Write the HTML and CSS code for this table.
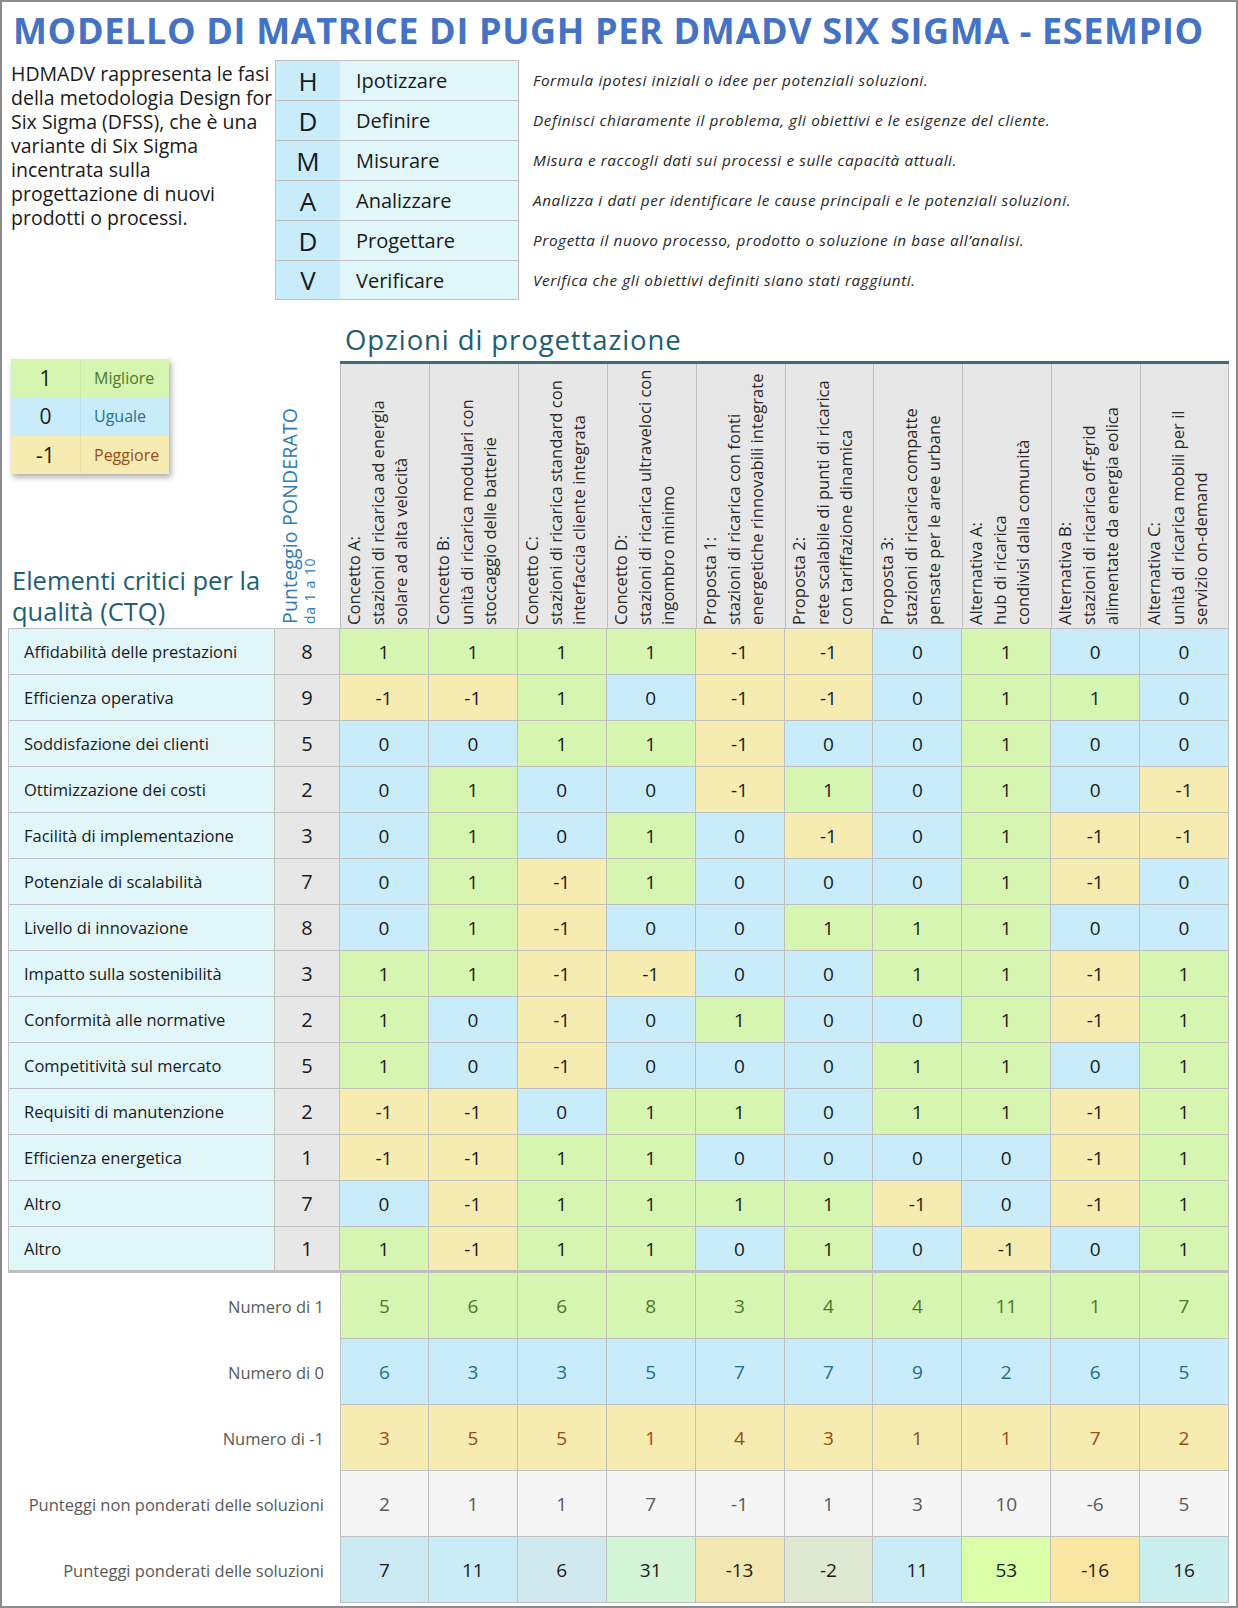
FILE: index.html
```html
<!DOCTYPE html>
<html lang="it">
<head>
<meta charset="utf-8">
<title>Matrice di Pugh DMADV</title>
<link rel="stylesheet" href="styles.css">
</head>
<body>
<div class="page">
  <h1 class="title">MODELLO DI MATRICE DI PUGH PER DMADV SIX SIGMA - ESEMPIO</h1>

  <section class="intro">
    <p class="intro-text">HDMADV rappresenta le fasi<br>della metodologia Design for<br>Six Sigma (DFSS), che è una<br>variante di Six Sigma<br>incentrata sulla<br>progettazione di nuovi<br>prodotti o processi.</p>
    <div class="phases">
      <div class="letter first">H</div><div class="name first">Ipotizzare</div><div class="desc">Formula ipotesi iniziali o idee per potenziali soluzioni.</div>
      <div class="letter">D</div><div class="name">Definire</div><div class="desc">Definisci chiaramente il problema, gli obiettivi e le esigenze del cliente.</div>
      <div class="letter">M</div><div class="name">Misurare</div><div class="desc">Misura e raccogli dati sui processi e sulle capacità attuali.</div>
      <div class="letter">A</div><div class="name">Analizzare</div><div class="desc">Analizza i dati per identificare le cause principali e le potenziali soluzioni.</div>
      <div class="letter">D</div><div class="name">Progettare</div><div class="desc">Progetta il nuovo processo, prodotto o soluzione in base all’analisi.</div>
      <div class="letter last">V</div><div class="name last">Verificare</div><div class="desc">Verifica che gli obiettivi definiti siano stati raggiunti.</div>
    </div>
  </section>

  <section class="top">
    <div class="ctq-head">
      <div class="legend">
        <div class="n g">1</div><div class="t g t-g">Migliore</div>
        <div class="n b">0</div><div class="t b t-b">Uguale</div>
        <div class="n y">-1</div><div class="t y t-y">Peggiore</div>
      </div>
      <div class="ctq-title">Elementi critici per la<br>qualità (CTQ)</div>
    </div>
    <div class="weight-head">
      <div class="vtext"><span class="wt-main">Punteggio PONDERATO</span><span class="wt-sub">da 1 a 10</span></div>
    </div>
    <div class="options">
      <div class="options-title">Opzioni di progettazione</div>
      <div class="hcells">
        <div class="hcell"><div class="htext">Concetto A:<br>stazioni di ricarica ad energia<br>solare ad alta velocità</div></div>
        <div class="hcell"><div class="htext">Concetto B:<br>unità di ricarica modulari con<br>stoccaggio delle batterie</div></div>
        <div class="hcell"><div class="htext">Concetto C:<br>stazioni di ricarica standard con<br>interfaccia cliente integrata</div></div>
        <div class="hcell"><div class="htext">Concetto D:<br>stazioni di ricarica ultraveloci con<br>ingombro minimo</div></div>
        <div class="hcell"><div class="htext">Proposta 1:<br>stazioni di ricarica con fonti<br>energetiche rinnovabili integrate</div></div>
        <div class="hcell"><div class="htext">Proposta 2:<br>rete scalabile di punti di ricarica<br>con tariffazione dinamica</div></div>
        <div class="hcell"><div class="htext">Proposta 3:<br>stazioni di ricarica compatte<br>pensate per le aree urbane</div></div>
        <div class="hcell"><div class="htext">Alternativa A:<br>hub di ricarica<br>condivisi dalla comunità</div></div>
        <div class="hcell"><div class="htext">Alternativa B:<br>stazioni di ricarica off-grid<br>alimentate da energia eolica</div></div>
        <div class="hcell lastcol"><div class="htext">Alternativa C:<br>unità di ricarica mobili per il<br>servizio on-demand</div></div>
      </div>
    </div>
  </section>

  <section class="matrix">
    <div class="lbl">Affidabilità delle prestazioni</div><div class="w">8</div>
    <div class="g">1</div><div class="g">1</div><div class="g">1</div><div class="g">1</div><div class="y">-1</div><div class="y">-1</div><div class="b">0</div><div class="g">1</div><div class="b">0</div><div class="b">0</div>

    <div class="lbl">Efficienza operativa</div><div class="w">9</div>
    <div class="y">-1</div><div class="y">-1</div><div class="g">1</div><div class="b">0</div><div class="y">-1</div><div class="y">-1</div><div class="b">0</div><div class="g">1</div><div class="g">1</div><div class="b">0</div>

    <div class="lbl">Soddisfazione dei clienti</div><div class="w">5</div>
    <div class="b">0</div><div class="b">0</div><div class="g">1</div><div class="g">1</div><div class="y">-1</div><div class="b">0</div><div class="b">0</div><div class="g">1</div><div class="b">0</div><div class="b">0</div>

    <div class="lbl">Ottimizzazione dei costi</div><div class="w">2</div>
    <div class="b">0</div><div class="g">1</div><div class="b">0</div><div class="b">0</div><div class="y">-1</div><div class="g">1</div><div class="b">0</div><div class="g">1</div><div class="b">0</div><div class="y">-1</div>

    <div class="lbl">Facilità di implementazione</div><div class="w">3</div>
    <div class="b">0</div><div class="g">1</div><div class="b">0</div><div class="g">1</div><div class="b">0</div><div class="y">-1</div><div class="b">0</div><div class="g">1</div><div class="y">-1</div><div class="y">-1</div>

    <div class="lbl">Potenziale di scalabilità</div><div class="w">7</div>
    <div class="b">0</div><div class="g">1</div><div class="y">-1</div><div class="g">1</div><div class="b">0</div><div class="b">0</div><div class="b">0</div><div class="g">1</div><div class="y">-1</div><div class="b">0</div>

    <div class="lbl">Livello di innovazione</div><div class="w">8</div>
    <div class="b">0</div><div class="g">1</div><div class="y">-1</div><div class="b">0</div><div class="b">0</div><div class="g">1</div><div class="g">1</div><div class="g">1</div><div class="b">0</div><div class="b">0</div>

    <div class="lbl">Impatto sulla sostenibilità</div><div class="w">3</div>
    <div class="g">1</div><div class="g">1</div><div class="y">-1</div><div class="y">-1</div><div class="b">0</div><div class="b">0</div><div class="g">1</div><div class="g">1</div><div class="y">-1</div><div class="g">1</div>

    <div class="lbl">Conformità alle normative</div><div class="w">2</div>
    <div class="g">1</div><div class="b">0</div><div class="y">-1</div><div class="b">0</div><div class="g">1</div><div class="b">0</div><div class="b">0</div><div class="g">1</div><div class="y">-1</div><div class="g">1</div>

    <div class="lbl">Competitività sul mercato</div><div class="w">5</div>
    <div class="g">1</div><div class="b">0</div><div class="y">-1</div><div class="b">0</div><div class="b">0</div><div class="b">0</div><div class="g">1</div><div class="g">1</div><div class="b">0</div><div class="g">1</div>

    <div class="lbl">Requisiti di manutenzione</div><div class="w">2</div>
    <div class="y">-1</div><div class="y">-1</div><div class="b">0</div><div class="g">1</div><div class="g">1</div><div class="b">0</div><div class="g">1</div><div class="g">1</div><div class="y">-1</div><div class="g">1</div>

    <div class="lbl">Efficienza energetica</div><div class="w">1</div>
    <div class="y">-1</div><div class="y">-1</div><div class="g">1</div><div class="g">1</div><div class="b">0</div><div class="b">0</div><div class="b">0</div><div class="b">0</div><div class="y">-1</div><div class="g">1</div>

    <div class="lbl">Altro</div><div class="w">7</div>
    <div class="b">0</div><div class="y">-1</div><div class="g">1</div><div class="g">1</div><div class="g">1</div><div class="g">1</div><div class="y">-1</div><div class="b">0</div><div class="y">-1</div><div class="g">1</div>

    <div class="lbl end">Altro</div><div class="w end">1</div>
    <div class="g end">1</div><div class="y end">-1</div><div class="g end">1</div><div class="g end">1</div><div class="b end">0</div><div class="g end">1</div><div class="b end">0</div><div class="y end">-1</div><div class="b end">0</div><div class="g end">1</div>
  </section>

  <section class="summary">
    <div class="slbl">Numero di 1</div>
    <div class="g sg first">5</div><div class="g sg">6</div><div class="g sg">6</div><div class="g sg">8</div><div class="g sg">3</div><div class="g sg">4</div><div class="g sg">4</div><div class="g sg">11</div><div class="g sg">1</div><div class="g sg">7</div>

    <div class="slbl">Numero di 0</div>
    <div class="b sb first">6</div><div class="b sb">3</div><div class="b sb">3</div><div class="b sb">5</div><div class="b sb">7</div><div class="b sb">7</div><div class="b sb">9</div><div class="b sb">2</div><div class="b sb">6</div><div class="b sb">5</div>

    <div class="slbl">Numero di -1</div>
    <div class="y sy first thick">3</div><div class="y sy thick">5</div><div class="y sy thick">5</div><div class="y sy thick">1</div><div class="y sy thick">4</div><div class="y sy thick">3</div><div class="y sy thick">1</div><div class="y sy thick">1</div><div class="y sy thick">7</div><div class="y sy thick">2</div>

    <div class="slbl">Punteggi non ponderati delle soluzioni</div>
    <div class="su first">2</div><div class="su">1</div><div class="su">1</div><div class="su">7</div><div class="su">-1</div><div class="su">1</div><div class="su">3</div><div class="su">10</div><div class="su">-6</div><div class="su">5</div>

    <div class="slbl">Punteggi ponderati delle soluzioni</div>
    <div class="sw first thick w1">7</div><div class="sw thick w2">11</div><div class="sw thick w3">6</div><div class="sw thick w4">31</div><div class="sw thick w5">-13</div><div class="sw thick w6">-2</div><div class="sw thick w7">11</div><div class="sw thick w8">53</div><div class="sw thick w9">-16</div><div class="sw thick w10">16</div>
  </section>
</div>
</body>
</html>
```

FILE: styles.css
```css
* { box-sizing: border-box; }

body {
  margin: 0;
  background: #ffffff;
  font-family: "Open Sans", "Liberation Sans", sans-serif;
  color: #262626;
}

.page {
  width: 1238px;
  height: 1608px;
  border: 2px solid #8c8c8c;
  overflow: hidden;
}

/* ---------- title ---------- */
.title {
  margin: 0;
  padding: 7px 0 0 11px;
  font-size: 36px;
  line-height: 44px;
  font-weight: 700;
  color: #4472c4;
  letter-spacing: 0.65px;
  white-space: nowrap;
}

/* ---------- intro ---------- */
.intro {
  display: flex;
  margin-top: 7px;
}

.intro-text {
  margin: 0;
  width: 273px;
  padding: 2px 0 0 9px;
  font-size: 19.5px;
  line-height: 24px;
  white-space: nowrap;
  color: #1a1a1a;
}

.phases {
  display: grid;
  grid-template-columns: 65px 179px auto;
  grid-auto-rows: 40px;
}

.phases .letter,
.phases .name {
  display: flex;
  align-items: center;
  border-top: 1px solid #bfbfbf;
}

.phases .letter {
  justify-content: center;
  background: #c8ecfa;
  border-left: 1px solid #bfbfbf;
  font-size: 26px;
  color: #1a1a1a;
}

.phases .name {
  padding-left: 16px;
  background: #e1f6f9;
  border-right: 1px solid #bfbfbf;
  font-size: 20px;
  color: #1a1a1a;
}

.phases .last {
  border-bottom: 1px solid #bfbfbf;
}

.phases .desc {
  display: flex;
  align-items: center;
  padding-left: 14px;
  font-size: 15.3px;
  letter-spacing: 0.6px;
  font-style: italic;
  color: #262626;
  white-space: nowrap;
}

/* ---------- header area ---------- */
.top {
  display: grid;
  grid-template-columns: 267px 65px 889px;
  margin-left: 6px;
}

.ctq-head {
  display: flex;
  flex-direction: column;
  justify-content: space-between;
}

.legend {
  display: grid;
  grid-template-columns: 70px 88px;
  grid-auto-rows: 38.3px;
  width: 158px;
  margin: 59px 0 0 3px;
  box-shadow: 2px 3px 6px rgba(0, 0, 0, 0.35);
}

.legend > div {
  display: flex;
  align-items: center;
}

.legend .n {
  justify-content: center;
  font-size: 21px;
  color: #1a1a1a;
  border-right: 1px solid rgba(0, 0, 0, 0.04);
}

.legend .t {
  padding-left: 13px;
  font-size: 16px;
}

.t-g { color: #4e7a29; }
.t-b { color: #2a6f91; }
.t-y { color: #9a4b14; }

.ctq-title {
  padding: 0 0 1px 4px;
  font-size: 25.5px;
  line-height: 31px;
  color: #1f5f73;
  white-space: nowrap;
}

.weight-head {
  display: flex;
  align-items: stretch;
  padding: 0 0 4px 4px;
}

.vtext {
  writing-mode: vertical-rl;
  transform: rotate(180deg);
  white-space: nowrap;
  color: #2e7bb4;
}

.wt-main {
  display: block;
  font-size: 19.5px;
  line-height: 22px;
  letter-spacing: 0.15px;
}

.wt-sub {
  display: block;
  font-size: 14px;
  line-height: 18px;
  letter-spacing: 0.8px;
}

.options {
  display: flex;
  flex-direction: column;
}

.options-title {
  padding: 22px 0 3px 5px;
  font-size: 27.5px;
  line-height: 36px;
  letter-spacing: 0.9px;
  color: #1d5d70;
  border-bottom: 3px solid #3e6f78;
  white-space: nowrap;
}

.hcells {
  display: grid;
  grid-template-columns: repeat(10, 1fr);
  height: 264px;
}

.hcell {
  display: flex;
  align-items: stretch;
  padding: 0 0 3px 1px;
  background: #e7e7e7;
  border-left: 1px solid #bfbfbf;
}

.hcell.lastcol {
  border-right: 1px solid #bfbfbf;
}

.htext {
  writing-mode: vertical-rl;
  transform: rotate(180deg);
  font-size: 16.6px;
  line-height: 23.5px;
  white-space: nowrap;
  color: #262626;
}

/* ---------- matrix ---------- */
.matrix {
  display: grid;
  grid-template-columns: 267px 65px repeat(10, 1fr);
  width: 1221px;
  margin-left: 6px;
  border-top: 1px solid #bfbfbf;
}

.matrix > div {
  height: 46px;
  display: flex;
  align-items: center;
  justify-content: center;
  border-right: 1px solid #bfbfbf;
  border-bottom: 1px solid #bfbfbf;
  font-size: 19px;
  color: #1a1a1a;
}

.matrix > .lbl {
  justify-content: flex-start;
  padding-left: 15px;
  background: #e1f6f9;
  border-left: 1px solid #bfbfbf;
  font-size: 16.5px;
}

.matrix > .w {
  background: #e7e7e7;
  font-size: 20px;
}

.matrix > .end {
  border-bottom: 3px solid #bfbfbf;
}

.g { background: #d6f5b0; }
.b { background: #c8ecfa; }
.y { background: #f6ebb0; }

/* ---------- summary ---------- */
.summary {
  display: grid;
  grid-template-columns: 332px repeat(10, 1fr);
  grid-auto-rows: 66px;
  width: 1221px;
  margin-left: 6px;
}

.summary > div {
  display: flex;
  align-items: center;
  justify-content: center;
  font-size: 19px;
}

.summary > .slbl {
  justify-content: flex-end;
  padding-right: 16px;
  font-size: 16.5px;
  color: #595959;
  white-space: nowrap;
}

.summary > div:not(.slbl) {
  border-right: 1px solid #bfbfbf;
  border-bottom: 1px solid #bfbfbf;
}

.summary > .first {
  border-left: 1px solid #bfbfbf;
}

.summary > .thick {
  border-bottom: 3px solid #bfbfbf;
}

.sg { color: #4c7a24; }
.sb { color: #1f6d8e; }
.sy { color: #9a4b14; }
.su { background: #f5f5f5; color: #595959; }
.sw { color: #1a1a1a; }

.w1 { background: #cbe9f2; }
.w2 { background: #c9ecf7; }
.w3 { background: #d0e9ee; }
.w4 { background: #d3f5d6; }
.w5 { background: #f2e7b2; }
.w6 { background: #dfe8d3; }
.w7 { background: #c9ecf7; }
.w8 { background: #d9ffa9; }
.w9 { background: #f8e6a2; }
.w10 { background: #c9eeee; }
```
